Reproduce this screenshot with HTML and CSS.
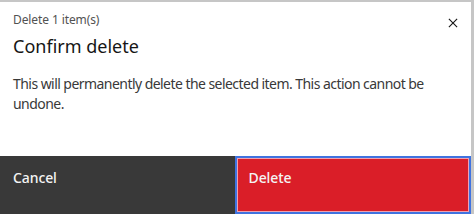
FILE: index.html
```html
<html>
<head>
	<title>Confirm delete</title>
	<link rel="stylesheet" href="styles.css">
</head>
<body>
	<div class="modal">
		<div class="modal-header">
			<p class="modal-label">Delete 1 item(s)</p>
			<h2 class="modal-title">Confirm delete</h2>
		</div>
		<button class="modal-close" aria-label="Close">
			<svg width="18" height="18" viewBox="0 0 16 16">
				<path d="M12 4.7L11.3 4 8 7.3 4.7 4 4 4.7 7.3 8 4 11.3 4.7 12 8 8.7 11.3 12 12 11.3 8.7 8z" fill="#161616"></path>
			</svg>
		</button>

		<div class="modal-content">
			<p>This will permanently delete the selected item. This action cannot be undone.</p>
		</div>

		<div class="modal-footer">
			<button class="btn btn-secondary">Cancel</button>
			<button class="btn btn-danger">Delete</button>
		</div>
	</div>
</body>
</html>
```

FILE: styles.css
```css
html, body {
	margin: 0;
	padding: 0;
	background-color: #ffffff;
}

.modal {
	position: relative;
	box-sizing: border-box;
	width: 474px;
	height: 214px;
	display: flex;
	flex-direction: column;
	background-color: #ffffff;
	border-top: 2px solid #c6c6c6;
	border-right: 3px solid #c6c6c6;
	font-family: "Noto Sans", "Open Sans", sans-serif;
	color: #161616;
}

.modal-header {
	padding: 10px 48px 0 13px;
}

.modal-label {
	margin: 0 0 4px 0;
	font-size: 12px;
	line-height: 16px;
	color: #525252;
	letter-spacing: -0.1px;
}

.modal-title {
	margin: 0;
	font-size: 18px;
	line-height: 28px;
	font-weight: 400;
	color: #161616;
}

.modal-close {
	position: absolute;
	top: 5px;
	right: 2px;
	width: 32px;
	height: 32px;
	padding: 0;
	border: none;
	background: transparent;
	display: flex;
	align-items: center;
	justify-content: center;
}

.modal-content {
	flex: 1;
	padding: 14px 30px 0 13px;
}

.modal-content p {
	margin: 0;
	font-size: 14px;
	line-height: 20px;
	letter-spacing: -0.55px;
	color: #393939;
}

.modal-footer {
	display: flex;
	height: 58px;
}

.btn {
	flex: 1;
	box-sizing: border-box;
	margin: 0;
	border: none;
	text-align: left;
	font-family: "Noto Sans", "Open Sans", sans-serif;
	font-size: 14px;
	font-weight: 500;
	line-height: 18px;
	letter-spacing: -0.1px;
	color: #f4f4f4;
	display: flex;
	align-items: flex-start;
}

.btn-secondary {
	background-color: #393939;
	padding: 13px 13px 0 13px;
}

.btn-danger {
	background-color: #da1e28;
	border: 2px solid #3f73e0;
	box-shadow: inset 0 0 0 1px #f0a0b0;
	padding: 11px 12px 0 12px;
}
```
